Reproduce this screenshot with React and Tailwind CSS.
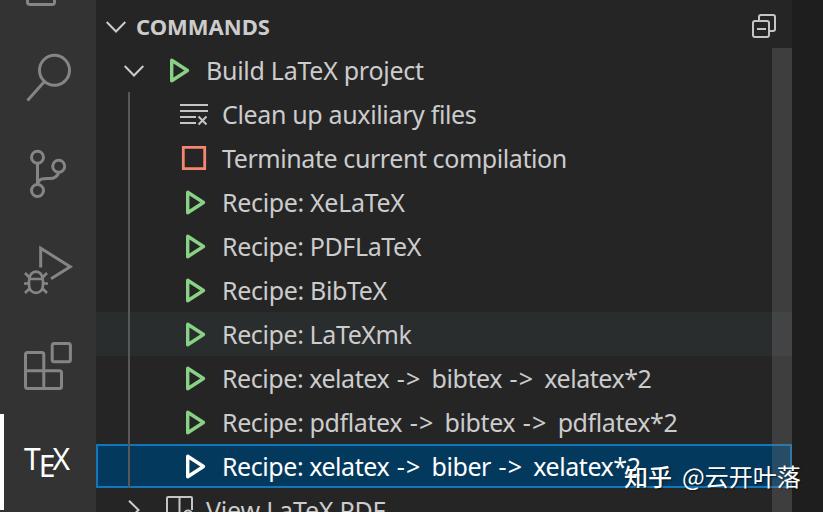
import clsx from "clsx";

const commands = [
  { label: "Clean up auxiliary files", icon: "clear", tracking: "tracking-[-0.35px]" },
  { label: "Terminate current compilation", icon: "stop", tracking: "tracking-[-0.42px]" },
  { label: "Recipe: XeLaTeX", icon: "play", tracking: "tracking-[-0.34px]" },
  { label: "Recipe: PDFLaTeX", icon: "play", tracking: "tracking-[-0.38px]" },
  { label: "Recipe: BibTeX", icon: "play", tracking: "tracking-[-0.35px]" },
  { label: "Recipe: LaTeXmk", icon: "play", tracking: "tracking-[-0.4px]", hovered: true },
  { label: "Recipe: xelatex -> bibtex -> xelatex*2", icon: "play", tracking: "tracking-[-0.45px]" },
  { label: "Recipe: pdflatex -> bibtex -> pdflatex*2", icon: "play", tracking: "tracking-[-0.4px]" },
  { label: "Recipe: xelatex -> biber -> xelatex*2", icon: "play", tracking: "tracking-[-0.45px]", selected: true },
];

function ActivityIcon({ children }) {
  return (
    <div className="flex h-24 w-24 shrink-0 items-center justify-center">
      <svg width="48" height="48" viewBox="0 0 48 48" fill="none" stroke="#858585" strokeWidth="3" className="overflow-visible">
        {children}
      </svg>
    </div>
  );
}

function Chevron({ className }) {
  return (
    <svg width="20" height="12" viewBox="0 0 20 12" fill="none" stroke="#cccccc" strokeWidth="2" className={className}>
      <path d="M0.7 1 10 10.5 19.3 1" />
    </svg>
  );
}

function RowIcon({ name, className }) {
  return (
    <svg width="32" height="32" viewBox="0 0 32 32" fill="none" className={clsx("shrink-0", className)}>
      {name === "play" && <path d="M9.7 6.3v20.4L25.5 16.5z" stroke="currentColor" strokeWidth="3.4" strokeLinejoin="round" />}
      {name === "stop" && <path d="M5.3 5.3h21.4v21.4H5.3z" stroke="#f48771" strokeWidth="2.8" />}
      {name === "clear" && (
        <path d="M2 7h28M2 13h28M2 19h16M2 25h16M20.5 18.5l8 8M28.5 18.5l-8 8" stroke="#c5c5c5" strokeWidth="2" />
      )}
    </svg>
  );
}

// arrows between the build steps are spaced wider than the words
function Label({ text }) {
  return text.split("->").map((part, i) => (
    <span key={i}>
      {i > 0 && <span className="mr-1 ml-[1.5px] tracking-[1.2px]">-&gt;</span>}
      {part}
    </span>
  ));
}

function TreeRow({ item }) {
  return (
    <div
      className={clsx(
        "relative flex h-11 items-center pl-[82px]",
        item.hovered && "bg-[#2a2d2e]",
        item.selected && "bg-[#04395e] text-white outline-2 -outline-offset-2 outline-[#1177bb]"
      )}
    >
      <RowIcon name={item.icon} className={item.selected ? "text-white" : "text-[#89d185]"} />
      <span className={clsx("ml-3 pt-px whitespace-pre", item.tracking)}>
        <Label text={item.label} />
      </span>
    </div>
  );
}

export default function App() {
  return (
    <div className="relative flex h-[512px] w-[823px] overflow-hidden bg-[#1e1e1e] font-['Noto_Sans',sans-serif] text-[25px] leading-none text-[#cccccc]">
      {/* Activity bar */}
      <nav className="flex w-24 shrink-0 flex-col bg-[#333333]">
        <div className="flex h-[30px] pl-[26px]">
          <div className="h-1.5 w-[30px] rounded-b border-x-[3px] border-b-[3px] border-[#858585]" />
        </div>
        <ActivityIcon>
          <circle cx="30.5" cy="16.3" r="15" />
          <path d="M20 28 3.5 46.5" />
        </ActivityIcon>
        <ActivityIcon>
          <circle cx="13.5" cy="7.3" r="6" />
          <circle cx="34.7" cy="16.3" r="6" />
          <circle cx="13.5" cy="40.5" r="6" />
          <path d="M13.5 13.5v21M34.7 22.5c-1.5 5-5 6-9 6-6 0-11-.5-12.2 6" />
        </ActivityIcon>
        <ActivityIcon>
          <path d="M16.7 21.5V2.2L46.2 20.7 27 32.8" />
          <path d="M5 35c0-12.5 14-12.5 14 0v4c0 10.5-14 10.5-14 0zM5 33h14M5 31 1 27M19 31l4-4M5 37.5H0M19 37.5h5M5.5 42.5 1 47M18.5 42.5 23 47" strokeWidth="2.7" />
        </ActivityIcon>
        <ActivityIcon>
          <rect x="28.2" y="1.5" width="18.2" height="18.2" rx="2" />
          <path d="M19.8 28.7V12.5a2 2 0 0 0-2-2H3.5a2 2 0 0 0-2 2v32a2 2 0 0 0 2 2h32a2 2 0 0 0 2-2V30.7a2 2 0 0 0-2-2H1.5M19.8 28.7v17.8" />
        </ActivityIcon>
        <div className="flex h-24 items-center border-l-4 border-white pt-0.5 pl-5 text-[30px] text-white">
          <span className="relative -top-1">T</span>
          <span className="relative top-[3px] -ml-0.5">E</span>
          <span className="relative -top-1 -ml-[3px]">X</span>
        </div>
      </nav>

      {/* Side bar */}
      <aside className="relative w-[696px] shrink-0 bg-[#252526]">
        <header className="flex h-12 items-center pt-1.5 pr-[15px] pl-2.5">
          <Chevron />
          <h2 className="-mt-0.5 ml-2.5 text-[22px] font-bold">COMMANDS</h2>
          <svg width="26" height="26" viewBox="0 0 26 26" fill="none" stroke="#c5c5c5" strokeWidth="2" className="-mt-0.5 ml-auto">
            <rect x="2" y="8" width="16" height="16" rx="2" />
            <path d="M8 8V4a2 2 0 0 1 2-2h12a2 2 0 0 1 2 2v12a2 2 0 0 1-2 2h-4M6 16h9" />
          </svg>
        </header>

        <div className="relative">
          <div className="flex h-11 items-center pl-7">
            <Chevron className="mt-0.5" />
            <RowIcon name="play" className="ml-[18px] text-[#89d185]" />
            <span className="ml-3 pt-px tracking-[-0.27px]">Build LaTeX project</span>
          </div>
          {commands.map(item => (
            <TreeRow key={item.label} item={item} />
          ))}
          {/* Indent guide */}
          <div className="absolute top-11 left-8 h-[396px] w-0.5 bg-[#585858]" />
        </div>

        <div className="flex h-11 items-center pl-7">
          <Chevron className="-rotate-90" />
          <svg width="32" height="32" viewBox="0 0 32 32" fill="none" stroke="#c5c5c5" strokeWidth="2" className="ml-[18px]">
            <path d="M15 26H6a1 1 0 0 1-1-1V4a1 1 0 0 1 1-1h23a1 1 0 0 1 1 1v12M17.5 3v23" />
            <circle cx="26" cy="20.5" r="4" />
          </svg>
          <span className="ml-3 pt-px tracking-[-0.2px]">View LaTeX PDF</span>
        </div>

        {/* Scrollbar */}
        <div className="absolute top-12 right-0 bottom-0 w-5 bg-[#797979]/30" />
      </aside>

      {/* Watermark */}
      <div className="absolute top-[464px] left-[624px] flex items-center gap-2.5 font-['Noto_Sans_CJK_SC',sans-serif] text-2xl leading-none whitespace-nowrap text-white [text-shadow:1px_1px_2px_rgba(0,0,0,0.6)]">
        <span className="font-medium">知乎</span>
        <span>@云开叶落</span>
      </div>
    </div>
  );
}
